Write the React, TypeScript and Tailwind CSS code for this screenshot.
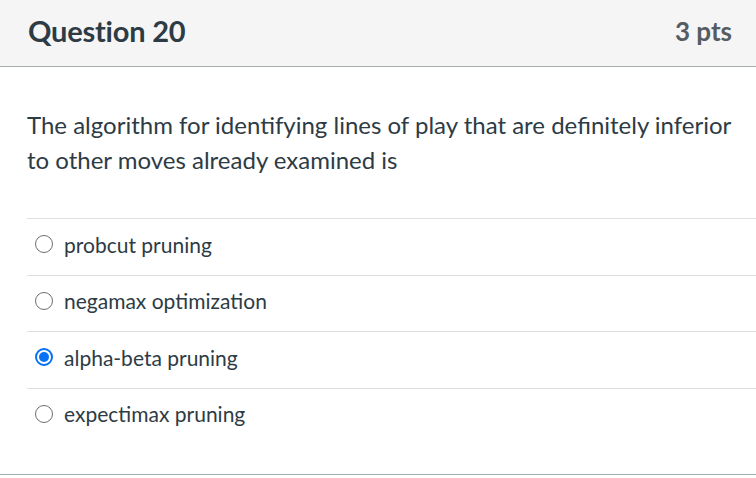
const answers = [
  { id: "a1", label: "probcut pruning", checked: false },
  { id: "a2", label: "negamax optimization", checked: false },
  { id: "a3", label: "alpha-beta pruning", checked: true },
  { id: "a4", label: "expectimax pruning", checked: false },
]

export default function App() {
  return (
    <div className="w-[756px] h-[478px] bg-white text-[#2d3b45] font-['Lato',sans-serif]">
      {/* Header */}
      <div className="h-[67px] bg-[#f5f5f5] border-b border-[#a5acb0] flex items-center justify-between pl-[28px] pr-[24px]">
        <h2 className="text-[29px] font-bold tracking-[-0.2px] text-[#2d3b45] mt-[-4px]">Question 20</h2>
        <div className="text-[26px] font-bold text-[#555c61] mt-[-4px]">3 pts</div>
      </div>

      {/* Body */}
      <div className="pl-[27px] pt-[40px] h-[408px] border-b border-[#a5acb0]">
        <p className="text-[24px] leading-[35px] pr-[20px]">
          The algorithm for identifying lines of play that are definitely inferior to other moves already examined is
        </p>

        <div className="mt-[41px]">
          {answers.map((a) => (
            <label
              key={a.id}
              className="flex items-center h-[56.5px] border-t border-[#dddfe1] pl-[8px] pb-[5px] gap-[11px] text-[21px]"
            >
              {a.checked ? (
                <span className="w-[18px] h-[18px] rounded-full border-[2px] border-[#0770f5] flex items-center justify-center">
                  <span className="w-[10px] h-[10px] rounded-full bg-[#0770f5]" />
                </span>
              ) : (
                <span className="w-[18px] h-[18px] rounded-full border-[1.5px] border-[#6b6f72] bg-white" />
              )}
              <span>{a.label}</span>
            </label>
          ))}
        </div>
      </div>
    </div>
  )
}
